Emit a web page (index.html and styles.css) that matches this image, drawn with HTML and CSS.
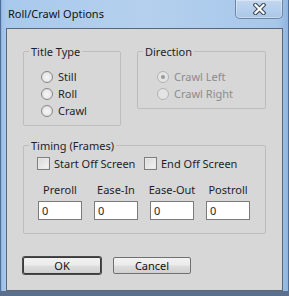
FILE: index.html
```html
<!DOCTYPE html>
<html>
<head>
<meta charset="utf-8">
<link rel="stylesheet" href="styles.css">
</head>
<body>
<div class="window">
  <div class="titlebar">
    <span class="title">Roll/Crawl Options</span>
    <div class="close" aria-label="Close">
      <svg width="13" height="12" viewBox="0 0 13 12">
        <path d="M2.5 2 L10.5 10 M10.5 2 L2.5 10" stroke="#3e4a5a" stroke-width="4.4" stroke-linecap="square" fill="none"/>
        <path d="M2.5 2 L10.5 10 M10.5 2 L2.5 10" stroke="#ffffff" stroke-width="2.2" stroke-linecap="square" fill="none"/>
      </svg>
    </div>
  </div>
  <div class="client">
    <div class="top-row">
      <fieldset class="group title-type">
        <legend>Title Type</legend>
        <div class="group-body tt-body">
          <div class="radio"><span class="dot"></span>Still</div>
          <div class="radio"><span class="dot"></span>Roll</div>
          <div class="radio"><span class="dot"></span>Crawl</div>
        </div>
      </fieldset>
      <fieldset class="group direction">
        <legend>Direction</legend>
        <div class="group-body dir-body">
          <div class="radio disabled"><span class="dot checked"></span>Crawl Left</div>
          <div class="radio disabled"><span class="dot"></span>Crawl Right</div>
        </div>
      </fieldset>
    </div>
    <fieldset class="group timing">
      <legend>Timing (Frames)</legend>
      <div class="group-body timing-body">
        <div class="checks">
          <div class="check"><span class="box"></span>Start Off Screen</div>
          <div class="check"><span class="box"></span>End Off Screen</div>
        </div>
        <div class="fields">
          <div class="field"><span class="field-label">Preroll</span><div class="input">0</div></div>
          <div class="field"><span class="field-label">Ease-In</span><div class="input">0</div></div>
          <div class="field"><span class="field-label">Ease-Out</span><div class="input">0</div></div>
          <div class="field"><span class="field-label">Postroll</span><div class="input">0</div></div>
        </div>
      </div>
    </fieldset>
    <div class="buttons">
      <div class="btn default">OK</div>
      <div class="btn">Cancel</div>
    </div>
  </div>
</div>
</body>
</html>
```
FILE: styles.css
```css
html, body {
  margin: 0;
  padding: 0;
}
body {
  width: 289px;
  height: 296px;
  overflow: hidden;
  font-family: "Noto Sans", "Open Sans", sans-serif;
  font-size: 11px;
  color: #1e1e2a;
}
.window {
  box-sizing: border-box;
  width: 289px;
  height: 296px;
  padding: 0 6px 5px 6px;
  display: flex;
  flex-direction: column;
  background:
    linear-gradient(90deg, #6f95c4 0px, #9ec0e8 2px, #a9c9ec 6px, #b4d0ee 50%, #a7c7ea 96%, #8fb3dc 100%);
  box-shadow: inset 0 -5px 0 #5a6f8c, inset 1px 0 0 #4f6f99, inset -1px 0 0 #4f6f99;
}
.titlebar {
  height: 28px;
  display: flex;
  align-items: flex-start;
  flex: none;
}
.title {
  margin-left: 2px;
  line-height: 28px;
  font-size: 11px;
  color: #111;
}
.close {
  margin-left: auto;
  width: 48px;
  height: 19px;
  box-sizing: border-box;
  border: 1px solid #6e86a6;
  border-top: none;
  border-radius: 0 0 5px 5px;
  background: linear-gradient(#c3d8f0, #a9c6e8);
  box-shadow: inset 0 0 0 1px rgba(255,255,255,0.35);
  display: flex;
  align-items: center;
  justify-content: center;
  padding-bottom: 1px;
}
.close svg {
  display: block;
}
.client {
  flex: 1;
  box-sizing: border-box;
  background: #d7d7d7;
  border: 1px solid #58677a;
  padding: 15px 16px 0 16px;
}
.top-row {
  display: flex;
  align-items: flex-start;
  gap: 16px;
}
.group {
  margin: 0;
  padding: 0;
  min-width: 0;
  box-sizing: border-box;
  border: 1px solid #bdbdbd;
  border-radius: 2px;
}
.group legend {
  margin-left: 5px;
  padding: 0 2px;
  line-height: 15px;
}
.title-type {
  width: 98px;
}
.direction {
  width: 129px;
}
.group-body {
  padding: 9px 0 6px 0;
}
.tt-body {
  padding-left: 17px;
}
.dir-body {
  padding-left: 19px;
}
.radio {
  display: flex;
  align-items: center;
  height: 17px;
  gap: 5px;
}
.dot {
  width: 12px;
  height: 12px;
  box-sizing: border-box;
  border-radius: 50%;
  border: 1px solid #868686;
  background: radial-gradient(circle at 50% 55%, #f6f6f6 0%, #e6e6e6 60%, #d2d2d2 100%);
  display: flex;
  align-items: center;
  justify-content: center;
}
.radio.disabled {
  color: #8c8c8c;
}
.radio.disabled .dot {
  border-color: #b3b3b3;
  background: #e4e4e4;
}
.dot.checked::after {
  content: "";
  width: 4px;
  height: 4px;
  border-radius: 50%;
  background: #9a9a9a;
}
.timing {
  width: 243px;
  margin-top: 12px;
}
.timing-body {
  padding: 2px 0 13px 13px;
}
.checks {
  display: grid;
  grid-template-columns: 107px auto;
}
.check {
  display: flex;
  align-items: center;
  height: 17px;
  gap: 4px;
}
.box {
  width: 13px;
  height: 13px;
  box-sizing: border-box;
  border: 1px solid #7e7e7e;
  background: linear-gradient(135deg, #d8d8d8, #f4f4f4);
  box-shadow: inset 0 0 0 1px #e8e8e8;
}
.fields {
  display: flex;
  gap: 12px;
  margin-top: 10px;
  padding-left: 1px;
}
.field {
  width: 44px;
  display: flex;
  flex-direction: column;
  align-items: center;
  gap: 4px;
}
.field-label {
  line-height: 15px;
  white-space: nowrap;
}
.input {
  box-sizing: border-box;
  width: 44px;
  height: 19px;
  background: #fff;
  border: 1px solid #7b7b7b;
  padding-left: 3px;
  line-height: 17px;
  align-self: stretch;
}
.buttons {
  display: flex;
  gap: 12px;
  margin-top: 23px;
}
.btn {
  box-sizing: border-box;
  width: 78px;
  height: 17px;
  border: 1px solid #707070;
  border-radius: 2px;
  background: linear-gradient(#f2f2f2 0%, #ebebeb 48%, #dedede 52%, #d0d0d0 100%);
  text-align: center;
  line-height: 15px;
  color: #111;
}
.btn.default {
  border-color: #3a3a3a;
  box-shadow: 0 0 0 1px #4a4a4a;
}
```
